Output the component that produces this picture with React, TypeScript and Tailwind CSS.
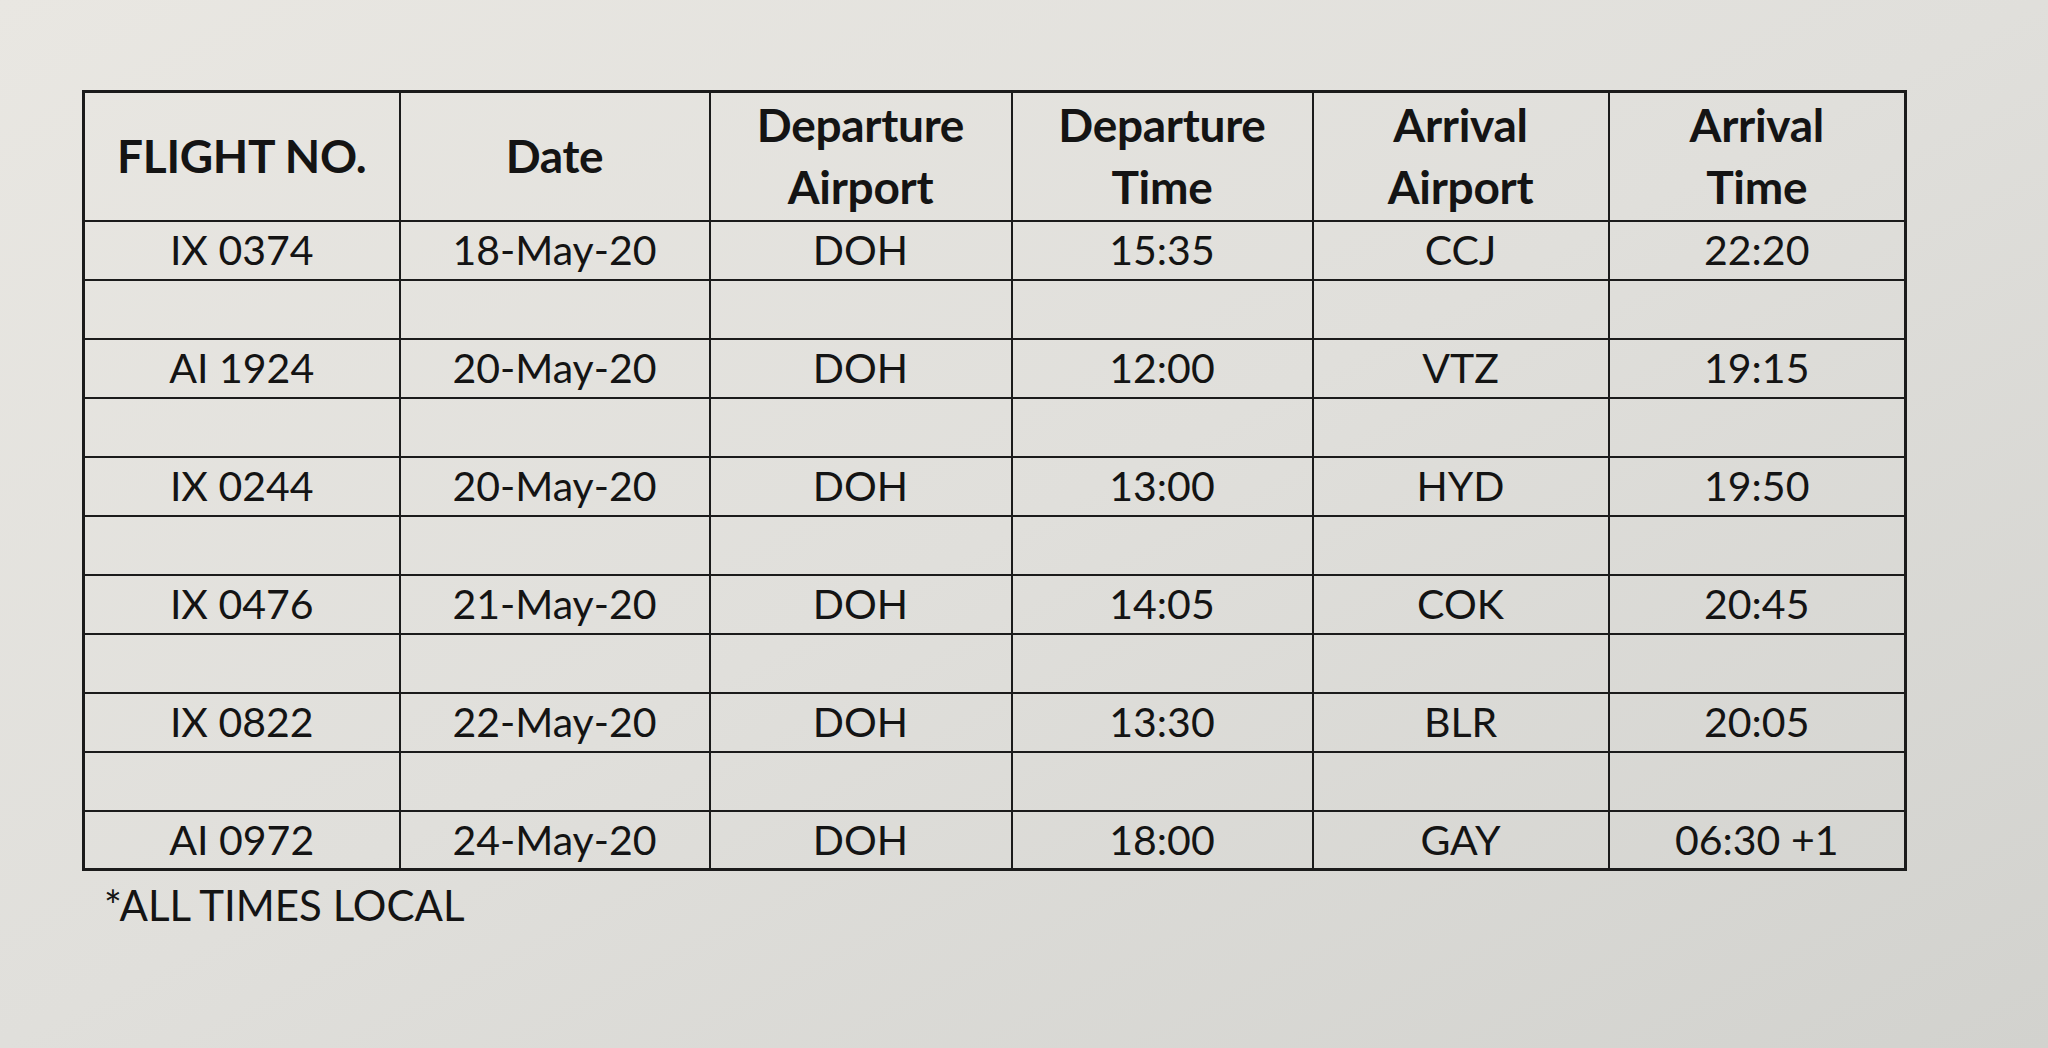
import React from "react";

const rows: (string[] | null)[] = [
  ["IX 0374", "18-May-20", "DOH", "15:35", "CCJ", "22:20"],
  null,
  ["AI 1924", "20-May-20", "DOH", "12:00", "VTZ", "19:15"],
  null,
  ["IX 0244", "20-May-20", "DOH", "13:00", "HYD", "19:50"],
  null,
  ["IX 0476", "21-May-20", "DOH", "14:05", "COK", "20:45"],
  null,
  ["IX 0822", "22-May-20", "DOH", "13:30", "BLR", "20:05"],
  null,
  ["AI 0972", "24-May-20", "DOH", "18:00", "GAY", "06:30 +1"],
];

const headers: string[][] = [
  ["FLIGHT NO."],
  ["Date"],
  ["Departure", "Airport"],
  ["Departure", "Time"],
  ["Arrival", "Airport"],
  ["Arrival", "Time"],
];

const widths = ["w-[316px]", "w-[310px]", "w-[302px]", "w-[301px]", "w-[296px]", "w-[297px]"];

export default function App() {
  return (
    <div
      className="h-[1048px] w-[2048px] overflow-hidden bg-linear-to-br from-[#e9e7e2] via-[#e0dfdb] to-[#d2d2ce] text-[#141414]"
      style={{ fontFamily: "Lato, 'Open Sans', 'Liberation Sans', sans-serif" }}
    >
      <div className="pl-[82px] pt-[90px]">
        <table className="table-fixed border-collapse border-[3px] border-[#1b1b1b] w-[1822px]">
          <colgroup>
            {widths.map((w, i) => (
              <col key={i} className={w} />
            ))}
          </colgroup>
          <thead>
            <tr className="h-[129px]">
              {headers.map((h, i) => (
                <th
                  key={i}
                  className="border-2 border-[#1b1b1b] p-0 text-center align-middle text-[46px] font-bold leading-[62px] tracking-[-0.3px]"
                >
                  {h.map((line, j) => (
                    <div key={j}>{line}</div>
                  ))}
                </th>
              ))}
            </tr>
          </thead>
          <tbody>
            {rows.map((r, i) => (
              <tr key={i} className="h-[59px]">
                {(r ?? ["", "", "", "", "", ""]).map((c, j) => (
                  <td
                    key={j}
                    className="border-2 border-[#1b1b1b] p-0 text-center align-middle text-[41px] leading-[50px]"
                  >
                    {c}
                  </td>
                ))}
              </tr>
            ))}
          </tbody>
        </table>
        <div className="mt-[10px] pl-[22px] text-[42px] leading-[49px]">*ALL TIMES LOCAL</div>
      </div>
    </div>
  );
}
